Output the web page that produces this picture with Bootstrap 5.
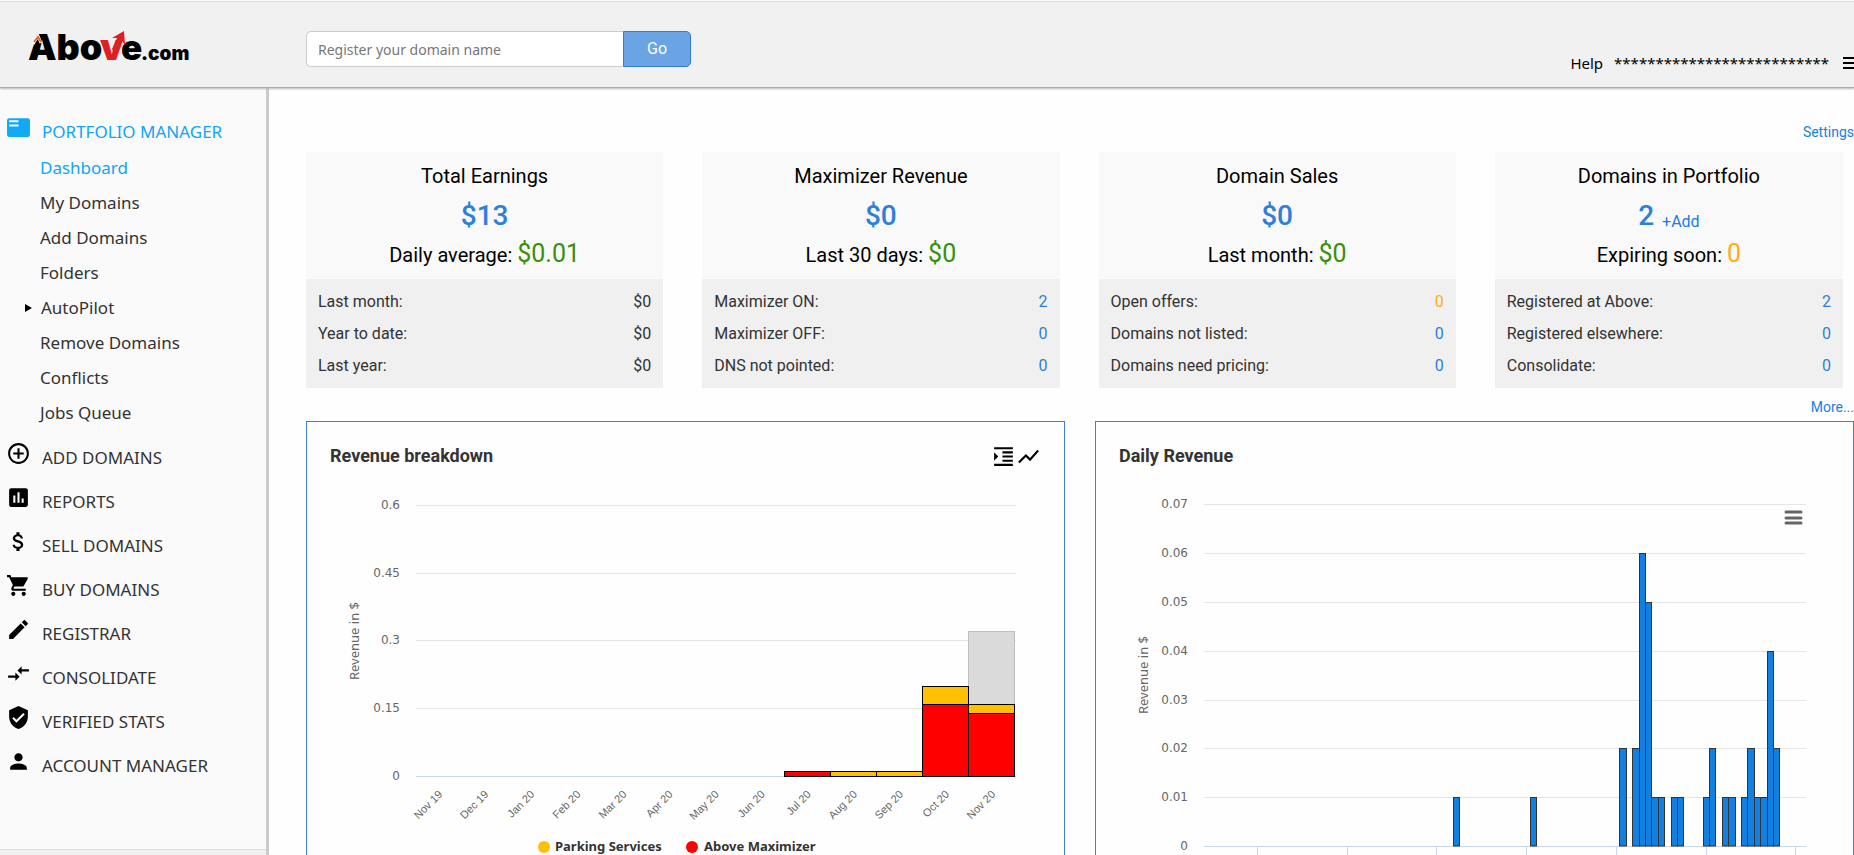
<!DOCTYPE html>
<html lang="en">
<head>
<meta charset="utf-8">
<meta name="viewport" content="width=device-width, initial-scale=1">
<title>Above.com - Portfolio Manager</title>
<link href="https://cdn.jsdelivr.net/npm/bootstrap@5.3.0/dist/css/bootstrap.min.css" rel="stylesheet">
<style>
  body { font-family: Roboto, sans-serif; color: #333; background: #fefefe; }
  a { text-decoration: none; }
  .top-bar { height: 87px; flex: none; background: #f1f1f1; border-top: 1px solid #dcdcdc; border-bottom: 1px solid #acacac; box-shadow: 0 1px 2px #bbb; z-index: 2; margin-top: 1px; }
  .logo-area { width: 306px; flex: none; padding-left: 28px; padding-top: 20px; }
  .logo-area text { font-family: Inter, sans-serif; font-weight: 900; }
  .search-box { width: 385px; height: 36px; margin-top: 29px; }
  .search-box .form-control { font: 14px "Noto Sans", sans-serif; border-color: #ccc; border-radius: 5px; padding: 0 11px; }
  .search-box .form-control::placeholder { color: #777; }
  .search-box .btn { width: 68px; flex: none; font-size: 16px; line-height: 16px; color: #fff; background: #6aa4e4; border: 1px solid #2f7bd8; border-radius: 5px; }
  .user-links { font: 15px/20px "Noto Sans", sans-serif; padding-top: 51px; gap: 11px; overflow: hidden; }
  .user-links a { color: #000; }
  .user-links button { width: 14px; height: 20px; overflow: hidden; }
  .side-nav { width: 269px; flex: none; background: #fafafa; border-right: 3px solid #cbcbcb; font: 17px "Noto Sans", sans-serif; padding-top: 24px; }
  .side-nav a { color: #333; }
  .side-nav .active { color: #11a5f2; }
  .side-head { height: 44px; padding-left: 6px; gap: 11px; }
  .side-head svg { width: 25px; height: 25px; fill: #000; margin-bottom: 8px; flex: none; }
  .side-head.active { height: 38px; }
  .side-head.active svg { fill: #11a9f4; }
  .sub-nav { line-height: 35px; padding-left: 40px; margin-bottom: 5px; }
  .caret { display: inline-block; width: 0; border: 4px solid transparent; border-left: 7px solid #000; border-right: 0; margin-left: -15px; margin-right: 9px; vertical-align: 2px; }
  .side-foot { height: 6px; background: #f0f0f0; border-top: 1px solid #ddd; }
  .content-area { padding-left: 37px; padding-top: 34px; min-width: 0; overflow: hidden; }
  .tiny-link { font-size: 14px; line-height: 20px; color: #1a7ee0; }
  .stat-grid { display: grid; grid-template-columns: 357fr 357fr 357fr 348fr; column-gap: 39px; padding-right: 11px; margin-top: 10px; margin-bottom: 9px; }
  .stat-top { height: 127px; background: #f9f9f9; color: #000; font-size: 20px; padding-top: 9px; }
  .stat-top h2 { font-size: 20px; font-weight: 400; line-height: 30px; margin: 0; }
  .stat-top .big { height: 40px; font-size: 28px; font-weight: 500; line-height: 40px; margin-top: 5px; color: #2f7fda; }
  .stat-top .big a { font-size: 16px; font-weight: 400; color: #1a7ee0; padding-top: 6px; }
  .stat-top .avg { line-height: 36px; }
  .stat-top .avg span { font-size: 25px; }
  .stat-body { background: #f0f0f0; padding: 7px 12px 6px; font-size: 16px; line-height: 32px; }
  .green { color: #38900a; }
  .orange { color: #ffad14; }
  .blue { color: #2f7fda; }
  .chart-grid { display: grid; grid-template-columns: 1fr 1fr; column-gap: 30px; margin-top: 4px; }
  .chart-box { border: 1px solid #3f80d0; height: 480px; }
  .chart-head { height: 58px; padding: 10px 23px 0 23px; }
  .chart-head h3 { font-size: 18px; font-weight: 700; line-height: 24px; margin: 0; }
  .chart-head button svg { width: 25px; height: 25px; display: block; }
  .plot text { font: 12px "DejaVu Sans", sans-serif; fill: #666; }
  .plot .month { font: 11px "Liberation Sans", sans-serif; }
  .plot .y-name { font: 13px "Noto Sans", sans-serif; }
  .plot .legend-name { font: bold 13px "Noto Sans", sans-serif; fill: #333; }
  .plot { display: block; width: 100%; }
</style>
</head>
<body class="vh-100 d-flex flex-column overflow-hidden">
<header class="top-bar d-flex">
  <a class="logo-area" href="#" aria-label="Above.com">
    <svg width="164" height="48" viewBox="0 0 164 48">
      <text x="0" y="38" font-size="36">Abo</text>
      <path d="M5 22l5-8 3 7" fill="none" stroke="#fff" stroke-width="3"/>
      <path d="M6 20l4-5 3 5" fill="none" stroke="#e8602c" stroke-width="2"/>
      <text x="93" y="38" font-size="35">e</text>
      <text x="72" y="38" font-size="37" fill="#e02020">v</text>
      <path d="M84 27l5-11-5 0 12-7 1 14-3-4-6 15z" fill="#e02020"/>
      <text x="113" y="38" font-size="19">.com</text>
    </svg>
  </a>
  <form class="search-box d-flex">
    <input class="form-control rounded-end-0 border-end-0" type="text" placeholder="Register your domain name" aria-label="Register your domain name">
    <button class="btn rounded-start-0" type="button">Go</button>
  </form>
  <div class="user-links d-flex ms-auto">
    <a href="#">Help</a>
    <a href="#">**************************</a>
    <button class="border-0 bg-transparent p-0 d-flex align-items-center" type="button" aria-label="Menu"><svg class="flex-shrink-0" width="24" height="24" viewBox="0 0 24 24"><path d="M3 18h18v-2H3v2zm0-5h18v-2H3v2zm0-7v2h18V6H3z"/></svg></button>
  </div>
</header>

<div class="d-flex flex-grow-1 overflow-hidden">
  <nav class="side-nav d-flex flex-column">
    <a class="side-head active d-flex align-items-center" href="#"><svg viewBox="0 0 24 24"><path d="M21 3H3c-1.100 0-2 .9-2 2v14c0 1.100.9 2 2 2h18c1.100 0 2-.9 2-2V5c0-1.100-.9-2-2-2zm-9 8H3V9h9v2zm0-4H3V5h9v2z"/></svg>PORTFOLIO MANAGER</a>
    <ul class="sub-nav list-unstyled">
      <li><a class="active" href="#">Dashboard</a></li>
      <li><a href="#">My Domains</a></li>
      <li><a href="#">Add Domains</a></li>
      <li><a href="#">Folders</a></li>
      <li><a href="#"><span class="caret"></span>AutoPilot</a></li>
      <li><a href="#">Remove Domains</a></li>
      <li><a href="#">Conflicts</a></li>
      <li><a href="#">Jobs Queue</a></li>
    </ul>
    <a class="side-head d-flex align-items-center" href="#"><svg viewBox="0 0 24 24"><path d="M13 7h-2v4H7v2h4v4h2v-4h4v-2h-4V7zm-1-5C6.480 2 2 6.480 2 12s4.480 10 10 10 10-4.480 10-10S17.520 2 12 2zm0 18c-4.410 0-8-3.590-8-8s3.590-8 8-8 8 3.590 8 8-3.590 8-8 8z"/></svg>ADD DOMAINS</a>
    <a class="side-head d-flex align-items-center" href="#"><svg viewBox="0 0 24 24"><path d="M19 3H5c-1.100 0-2 .9-2 2v14c0 1.100.9 2 2 2h14c1.100 0 2-.9 2-2V5c0-1.100-.9-2-2-2zM9 17H7v-7h2v7zm4 0h-2V7h2v10zm4 0h-2v-4h2v4z"/></svg>REPORTS</a>
    <a class="side-head d-flex align-items-center" href="#"><svg viewBox="0 0 24 24"><path d="M11.800 10.900c-2.270-.59-3-1.200-3-2.150 0-1.090 1.010-1.850 2.700-1.850 1.780 0 2.440.85 2.500 2.100h2.210c-.07-1.720-1.120-3.300-3.210-3.810V3h-3v2.160c-1.940.42-3.500 1.680-3.500 3.610 0 2.310 1.910 3.460 4.700 4.130 2.500.6 3 1.480 3 2.410 0 .69-.49 1.790-2.700 1.790-2.060 0-2.870-.92-2.980-2.100h-2.200c.12 2.190 1.760 3.420 3.680 3.830V21h3v-2.150c1.950-.37 3.500-1.500 3.500-3.550 0-2.840-2.430-3.810-4.700-4.400z"/></svg>SELL DOMAINS</a>
    <a class="side-head d-flex align-items-center" href="#"><svg viewBox="0 0 24 24"><path d="M7 18c-1.100 0-1.990.9-1.990 2S5.900 22 7 22s2-.9 2-2-.9-2-2-2zM1 2v2h2l3.600 7.590-1.350 2.450c-.16.28-.25.61-.25.96 0 1.100.9 2 2 2h12v-2H7.420c-.14 0-.25-.11-.25-.25l.03-.12.9-1.630h7.450c.75 0 1.410-.41 1.750-1.030l3.580-6.490c.08-.14.12-.31.12-.48 0-.55-.45-1-1-1H5.210l-.94-2H1zm16 16c-1.100 0-1.990.9-1.990 2s.89 2 1.990 2 2-.9 2-2-.9-2-2-2z"/></svg>BUY DOMAINS</a>
    <a class="side-head d-flex align-items-center" href="#"><svg viewBox="0 0 24 24"><path d="M3 17.250V21h3.750L17.810 9.940l-3.750-3.750L3 17.250zM20.710 7.040c.39-.39.39-1.020 0-1.410l-2.340-2.340c-.39-.39-1.020-.39-1.410 0l-1.830 1.830 3.750 3.750 1.830-1.830z"/></svg>REGISTRAR</a>
    <a class="side-head d-flex align-items-center" href="#"><svg viewBox="0 0 24 24"><path d="M9.010 14H2v2h7.010v3L13 15l-3.990-4v3zm5.980-1v-3H22V8h-7.010V5L11 9l3.990 4z"/></svg>CONSOLIDATE</a>
    <a class="side-head d-flex align-items-center" href="#"><svg viewBox="0 0 24 24"><path d="M12 1L3 5v6c0 5.550 3.840 10.740 9 12 5.160-1.260 9-6.450 9-12V5l-9-4zm-2 16l-4-4 1.410-1.410L10 14.170l6.590-6.590L18 9l-8 8z"/></svg>VERIFIED STATS</a>
    <a class="side-head d-flex align-items-center" href="#"><svg viewBox="0 0 24 24"><path d="M12 12c2.210 0 4-1.790 4-4s-1.790-4-4-4-4 1.790-4 4 1.790 4 4 4zm0 2c-2.670 0-8 1.340-8 4v2h16v-2c0-2.660-5.330-4-8-4z"/></svg>ACCOUNT MANAGER</a>
    <div class="side-foot mt-auto"></div>
  </nav>

  <main class="content-area flex-grow-1">
    <div class="d-flex justify-content-end"><a class="tiny-link" href="#">Settings</a></div>
    <div class="stat-grid">
      <section>
        <div class="stat-top text-center">
          <h2>Total Earnings</h2>
          <div class="big">$13</div>
          <div class="avg">Daily average: <span class="green">$0.01</span></div>
        </div>
        <div class="stat-body">
          <div class="d-flex justify-content-between"><span>Last month:</span><span>$0</span></div>
          <div class="d-flex justify-content-between"><span>Year to date:</span><span>$0</span></div>
          <div class="d-flex justify-content-between"><span>Last year:</span><span>$0</span></div>
        </div>
      </section>
      <section>
        <div class="stat-top text-center">
          <h2>Maximizer Revenue</h2>
          <div class="big">$0</div>
          <div class="avg">Last 30 days: <span class="green">$0</span></div>
        </div>
        <div class="stat-body">
          <div class="d-flex justify-content-between"><span>Maximizer ON:</span><a class="blue" href="#">2</a></div>
          <div class="d-flex justify-content-between"><span>Maximizer OFF:</span><a class="blue" href="#">0</a></div>
          <div class="d-flex justify-content-between"><span>DNS not pointed:</span><a class="blue" href="#">0</a></div>
        </div>
      </section>
      <section>
        <div class="stat-top text-center">
          <h2>Domain Sales</h2>
          <div class="big">$0</div>
          <div class="avg">Last month: <span class="green">$0</span></div>
        </div>
        <div class="stat-body">
          <div class="d-flex justify-content-between"><span>Open offers:</span><a class="orange" href="#">0</a></div>
          <div class="d-flex justify-content-between"><span>Domains not listed:</span><a class="blue" href="#">0</a></div>
          <div class="d-flex justify-content-between"><span>Domains need pricing:</span><a class="blue" href="#">0</a></div>
        </div>
      </section>
      <section>
        <div class="stat-top text-center">
          <h2>Domains in Portfolio</h2>
          <div class="big d-flex justify-content-center gap-2">2 <a href="#">+Add</a></div>
          <div class="avg">Expiring soon: <span class="orange">0</span></div>
        </div>
        <div class="stat-body">
          <div class="d-flex justify-content-between"><span>Registered at Above:</span><a class="blue" href="#">2</a></div>
          <div class="d-flex justify-content-between"><span>Registered elsewhere:</span><a class="blue" href="#">0</a></div>
          <div class="d-flex justify-content-between"><span>Consolidate:</span><a class="blue" href="#">0</a></div>
        </div>
      </section>
    </div>
    <div class="d-flex justify-content-end"><a class="tiny-link" href="#">More...</a></div>
    <div class="chart-grid">
      <section class="chart-box">
        <div class="chart-head d-flex justify-content-between align-items-center">
          <h3>Revenue breakdown</h3>
          <div class="d-flex">
            <button class="border-0 bg-transparent p-0" type="button" aria-label="Table view"><svg viewBox="0 0 24 24"><path d="M3 21h18v-2H3v2zM3 8v8l4-4-4-4zm8 9h10v-2H11v2zM3 3v2h18V3H3zm8 6h10V7H11v2zm0 4h10v-2H11v2z"/></svg></button>
            <button class="border-0 bg-transparent p-0" type="button" aria-label="Line chart"><svg viewBox="0 0 24 24"><path d="M3.500 18.490l6-6.010 4 4L22 6.920l-1.410-1.410-7.090 7.970-4-4L2 16.990z"/></svg></button>
          </div>
        </div>
        <svg class="plot" id="monthly" viewBox="0 0 757 400"></svg>
      </section>
      <section class="chart-box">
        <div class="chart-head d-flex justify-content-between align-items-center">
          <h3>Daily Revenue</h3>
        </div>
        <svg class="plot" id="daily" viewBox="0 0 757 400"></svg>
      </section>
    </div>
  </main>
</div>

<script src="https://cdn.jsdelivr.net/npm/bootstrap@5.3.0/dist/js/bootstrap.bundle.min.js"></script>
<script>
  const line = (x1, y1, x2, y2, color) =>
    `<line x1="${x1}" y1="${y1}" x2="${x2}" y2="${y2}" stroke="${color}"/>`;
  const bar = (x, y, w, h, fill, stroke) =>
    `<rect x="${x}" y="${y}" width="${w}" height="${h}" fill="${fill}" stroke="${stroke}"/>`;
  const snap = n => Math.round(n) + 0.5;

  // Revenue per month, stacked by service
  (function () {
    const months = ['Nov 19', 'Dec 19', 'Jan 20', 'Feb 20', 'Mar 20', 'Apr 20', 'May 20', 'Jun 20', 'Jul 20', 'Aug 20', 'Sep 20', 'Oct 20', 'Nov 20'];
    const maximizer = { 8: 0.01, 11: 0.16, 12: 0.14 };
    const parking = { 9: 0.01, 10: 0.01, 11: 0.04, 12: 0.02 };
    const forecast = { 12: 0.16 };
    const left = 109, right = 708, base = 296, scale = 452, step = (right - left) / months.length;
    let out = '', fixed = '', expected = '';
    [0.6, 0.45, 0.3, 0.15, 0].forEach(v => {
      const y = snap(base - v * scale);
      out += line(left, y, right + 1, y, v ? '#e6e6e6' : '#ccd6eb');
      out += `<text x="93" y="${y + 3}" text-anchor="end">${v}</text>`;
    });
    months.forEach((m, i) => {
      const x = snap(left + i * step - 1), w = snap(left + (i + 1) * step - 1) - x;
      let sum = 0;
      [[maximizer, '#ff0000'], [parking, '#ffc000'], [forecast, '']].forEach(([set, fill]) => {
        if (!set[i]) return;
        const y0 = snap(base - sum * scale);
        sum += set[i];
        const y1 = snap(base - sum * scale);
        if (fill) fixed += bar(x, y1, w, y0 - y1, fill, '#000');
        else expected += bar(x, y1, w, y0 - y1, '#dadada', '#bfbfbf');
      });
      const cx = left + (i + 0.5) * step + 4;
      out += `<text class="month" x="${cx}" y="315" text-anchor="end" transform="rotate(-45 ${cx} 315)">${m}</text>`;
    });
    out += expected + fixed;
    out += '<text class="y-name" x="52" y="161" text-anchor="middle" transform="rotate(-90 52 161)">Revenue in $</text>';
    out += '<circle cx="237" cy="367" r="6" fill="#ffc000"/><text class="legend-name" x="248" y="371">Parking Services</text>';
    out += '<circle cx="385" cy="367" r="6" fill="#ff0000"/><text class="legend-name" x="397" y="371">Above Maximizer</text>';
    document.getElementById('monthly').innerHTML = out;
  })();

  // Revenue per day: day offset, cents
  (function () {
    const days = [[0, 1], [12, 1], [26, 2], [28, 2], [29, 6], [30, 5], [31, 1], [32, 1], [34, 1], [35, 1], [39, 1], [40, 2], [42, 1], [43, 1], [45, 1], [46, 2], [47, 1], [48, 1], [49, 4], [50, 2]];
    const left = 108, right = 710, base = 366, unit = 48.8;
    let out = '';
    for (let v = 7; v >= 0; v--) {
      const y = snap(base - v * unit);
      out += line(left, y, right, y, v ? '#e6e6e6' : '#ccd6eb');
      out += `<text x="92" y="${y + 3}" text-anchor="end">${v ? '0.0' + v : 0}</text>`;
    }
    for (let t = 0; t < 7; t++) {
      const x = snap(161 + t * 89.7);
      out += line(x, base, x, base + 10, '#ccd6eb');
    }
    days.forEach(([d, v]) => {
      const x = snap(357 + d * 6.4), w = snap(357 + (d + 1) * 6.4) - x, y = snap(base - v * unit);
      out += bar(x, y, w, base - y, '#1180e3', '#333');
    });
    out += '<text class="y-name" x="52" y="195" text-anchor="middle" transform="rotate(-90 52 195)">Revenue in $</text>';
    out += '<path d="M690 32h15M690 38h15M690 43h15" stroke="#666" stroke-width="3" stroke-linecap="round"/>';
    document.getElementById('daily').innerHTML = out;
  })();
</script>
</body>
</html>
